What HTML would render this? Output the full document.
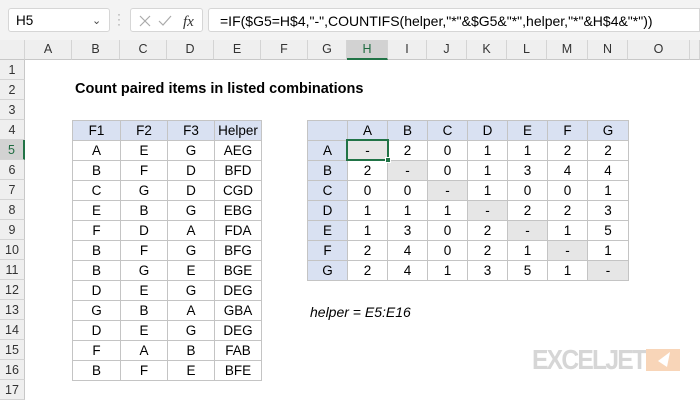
<!DOCTYPE html>
<html><head><meta charset="utf-8"><style>
*{margin:0;padding:0;box-sizing:border-box}
body{width:700px;height:400px;overflow:hidden;background:#fff;font-family:"Liberation Sans",Arial,sans-serif;position:relative;font-size:13px;color:#000}
.abs{position:absolute}
.top{left:0;top:0;width:700px;height:40px;background:#f3f3f3}
.namebox{left:8px;top:8px;width:102px;height:24px;background:#fff;border:1px solid #d6d6d6;border-radius:3px;font-size:13.5px;padding:4px 0 0 7px}
.fxbox{left:130px;top:8px;width:73px;height:24px;background:#fff;border:1px solid #d6d6d6;border-radius:3px}
.fbar{left:208px;top:8px;width:492px;height:24px;background:#fff;border:1px solid #d6d6d6;border-radius:3px 0 0 3px;font-size:14px;padding:4px 0 0 11px;white-space:nowrap}
.colhdr{top:40px;height:20px;background:#efefef;border-right:1px solid #d4d4d4;border-bottom:1px solid #c8c8c8;text-align:center;font-size:12.5px;line-height:19px;color:#333}
.rowhdr{left:0;width:25px;height:20px;background:#efefef;border-bottom:1px solid #d4d4d4;border-right:1px solid #c8c8c8;text-align:center;font-size:12.5px;line-height:20px;color:#333}
table{border-collapse:collapse;position:absolute}
td{border:1px solid #c4c4c4;text-align:center;font-size:13.5px;height:20px;padding:0;line-height:18px}
.h td{background:#d9e1f2}
td.hh{background:#d9e1f2}
td.g{background:#e6e6e6}
</style></head><body>
<div class="abs top"></div>
<div class="abs namebox">H5</div>
<div class="abs" style="left:92px;top:14px;font-size:11px;color:#444">&#8964;</div>
<div class="abs" style="left:117px;top:12px;color:#999;font-size:12px;line-height:5px">·<br>·<br>·</div>
<div class="abs fxbox">
<svg width="73" height="24" style="position:absolute;left:0;top:0"><path d="M9 7l10 10M19 7L9 17" stroke="#aaa" stroke-width="1.2" fill="none"/><path d="M28 12l4 4 8-9" stroke="#aaa" stroke-width="1.2" fill="none"/><text x="52" y="17" font-family="Liberation Serif" font-style="italic" font-size="15" fill="#333">fx</text></svg>
</div>
<div class="abs fbar">=IF($G5=H$4,"-",COUNTIFS(helper,"*"&amp;$G5&amp;"*",helper,"*"&amp;H$4&amp;"*"))</div>

<div class="abs colhdr" style="left:0;width:25px"></div>
<div class="abs colhdr" style="left:25px;width:47px">A</div>
<div class="abs colhdr" style="left:72px;width:48px">B</div>
<div class="abs colhdr" style="left:120px;width:47px">C</div>
<div class="abs colhdr" style="left:167px;width:47px">D</div>
<div class="abs colhdr" style="left:214px;width:47px">E</div>
<div class="abs colhdr" style="left:261px;width:47px">F</div>
<div class="abs colhdr" style="left:308px;width:39px">G</div>
<div class="abs colhdr" style="left:347px;width:41px;background:#d2d2d2;border-bottom:2px solid #217346;color:#1e6b40">H</div>
<div class="abs colhdr" style="left:388px;width:39px">I</div>
<div class="abs colhdr" style="left:427px;width:40px">J</div>
<div class="abs colhdr" style="left:467px;width:40px">K</div>
<div class="abs colhdr" style="left:507px;width:40px">L</div>
<div class="abs colhdr" style="left:547px;width:41px">M</div>
<div class="abs colhdr" style="left:588px;width:40px">N</div>
<div class="abs colhdr" style="left:628px;width:62px">O</div>
<div class="abs colhdr" style="left:690px;width:10px"></div>

<div class="abs rowhdr" style="top:60px">1</div>
<div class="abs rowhdr" style="top:80px">2</div>
<div class="abs rowhdr" style="top:100px">3</div>
<div class="abs rowhdr" style="top:120px">4</div>
<div class="abs rowhdr" style="top:140px;background:#d2d2d2;border-right:2px solid #217346;color:#1e6b40">5</div>
<div class="abs rowhdr" style="top:160px">6</div>
<div class="abs rowhdr" style="top:180px">7</div>
<div class="abs rowhdr" style="top:200px">8</div>
<div class="abs rowhdr" style="top:220px">9</div>
<div class="abs rowhdr" style="top:240px">10</div>
<div class="abs rowhdr" style="top:260px">11</div>
<div class="abs rowhdr" style="top:280px">12</div>
<div class="abs rowhdr" style="top:300px">13</div>
<div class="abs rowhdr" style="top:320px">14</div>
<div class="abs rowhdr" style="top:340px">15</div>
<div class="abs rowhdr" style="top:360px">16</div>
<div class="abs rowhdr" style="top:380px">17</div>

<div class="abs" style="left:75px;top:81px;font-weight:bold;font-size:14.5px">Count paired items in listed combinations</div>

<table style="left:72px;top:120px">
<colgroup><col style="width:48px"><col style="width:47px"><col style="width:47px"><col style="width:47px"></colgroup>
<tr class="h"><td>F1</td><td>F2</td><td>F3</td><td>Helper</td></tr>
<tr><td>A</td><td>E</td><td>G</td><td>AEG</td></tr>
<tr><td>B</td><td>F</td><td>D</td><td>BFD</td></tr>
<tr><td>C</td><td>G</td><td>D</td><td>CGD</td></tr>
<tr><td>E</td><td>B</td><td>G</td><td>EBG</td></tr>
<tr><td>F</td><td>D</td><td>A</td><td>FDA</td></tr>
<tr><td>B</td><td>F</td><td>G</td><td>BFG</td></tr>
<tr><td>B</td><td>G</td><td>E</td><td>BGE</td></tr>
<tr><td>D</td><td>E</td><td>G</td><td>DEG</td></tr>
<tr><td>G</td><td>B</td><td>A</td><td>GBA</td></tr>
<tr><td>D</td><td>E</td><td>G</td><td>DEG</td></tr>
<tr><td>F</td><td>A</td><td>B</td><td>FAB</td></tr>
<tr><td>B</td><td>F</td><td>E</td><td>BFE</td></tr>
</table>

<table style="left:307px;top:120px">
<colgroup><col style="width:40px"><col style="width:40px"><col style="width:40px"><col style="width:40px"><col style="width:40px"><col style="width:40px"><col style="width:40px"><col style="width:41px"></colgroup>
<tr class="h"><td></td><td>A</td><td>B</td><td>C</td><td>D</td><td>E</td><td>F</td><td>G</td></tr>
<tr><td class="hh">A</td><td class="g">-</td><td>2</td><td>0</td><td>1</td><td>1</td><td>2</td><td>2</td></tr>
<tr><td class="hh">B</td><td>2</td><td class="g">-</td><td>0</td><td>1</td><td>3</td><td>4</td><td>4</td></tr>
<tr><td class="hh">C</td><td>0</td><td>0</td><td class="g">-</td><td>1</td><td>0</td><td>0</td><td>1</td></tr>
<tr><td class="hh">D</td><td>1</td><td>1</td><td>1</td><td class="g">-</td><td>2</td><td>2</td><td>3</td></tr>
<tr><td class="hh">E</td><td>1</td><td>3</td><td>0</td><td>2</td><td class="g">-</td><td>1</td><td>5</td></tr>
<tr><td class="hh">F</td><td>2</td><td>4</td><td>0</td><td>2</td><td>1</td><td class="g">-</td><td>1</td></tr>
<tr><td class="hh">G</td><td>2</td><td>4</td><td>1</td><td>3</td><td>5</td><td>1</td><td class="g">-</td></tr>
</table>
<div class="abs" style="left:346px;top:139px;width:43px;height:22px;border:2px solid #217346"></div>
<div class="abs" style="left:385px;top:157px;width:6px;height:6px;background:#217346;border:1px solid #fff"></div>

<div class="abs" style="left:310px;top:304px;font-style:italic;font-size:14px">helper = E5:E16</div>

<div class="abs" style="left:532px;top:344px;font-size:28px;font-weight:bold;color:#d6d6d6;letter-spacing:-2px;font-family:'Liberation Sans',sans-serif;transform:scaleX(0.88);transform-origin:0 0;white-space:nowrap">EXCELJET</div>
<div class="abs" style="left:646px;top:349px;width:34px;height:22px;background:#f8d5b8"></div>
<svg class="abs" style="left:646px;top:349px" width="34" height="22"><path d="M24 3L12 12 21 18Z" fill="#fff"/></svg>
</body></html>
